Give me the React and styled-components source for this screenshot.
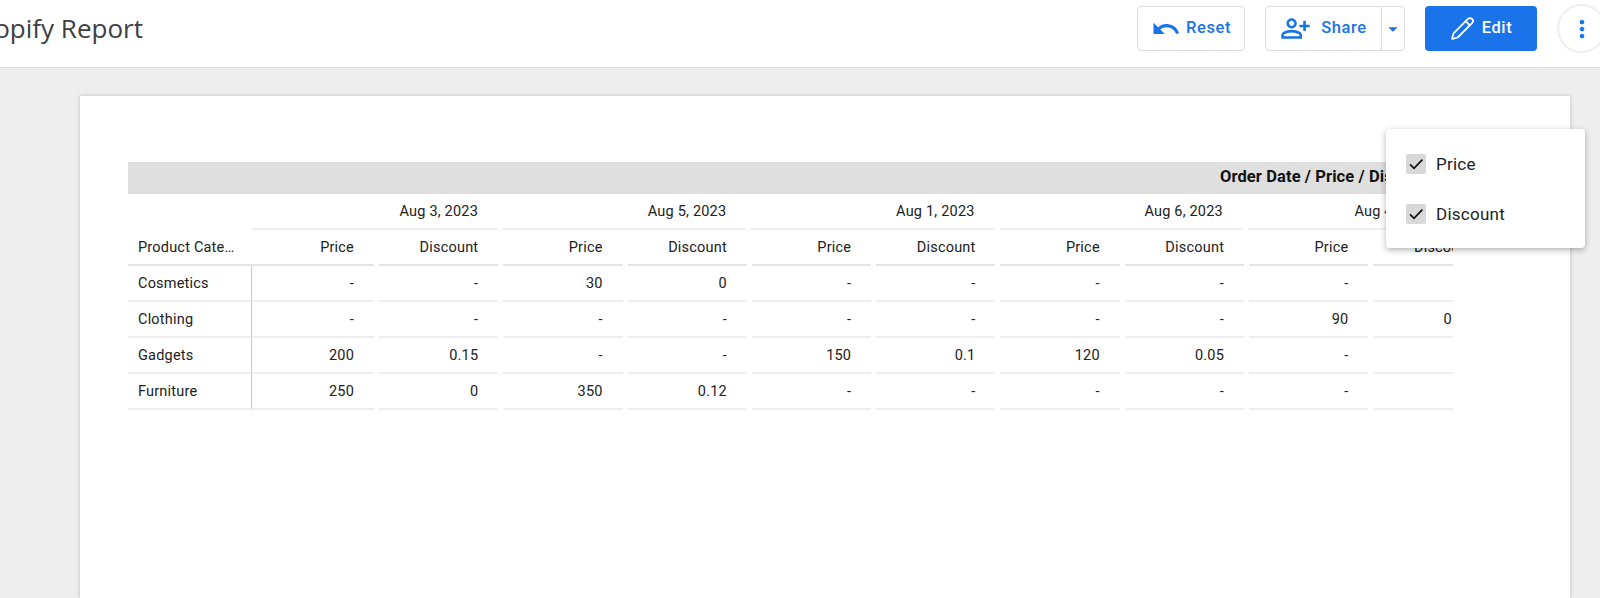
import React from "react";
import styled, { createGlobalStyle } from "styled-components";
import { MdUndo, MdOutlinePersonAddAlt, MdArrowDropDown, MdMoreVert } from "react-icons/md";
import { Pencil } from "lucide-react";

const GlobalStyle = createGlobalStyle`
  html, body {
    margin: 0;
    height: 100%;
    overflow: hidden;
    background: #eeeeee;
    font-family: Roboto, "Liberation Sans", sans-serif;
  }
`;

const Shell = styled.div`
  width: 1600px;
  height: 598px;
  overflow: hidden;
  position: relative;
  display: flex;
  flex-direction: column;
`;

const Header = styled.header`
  height: 67px;
  flex: none;
  background: #fff;
  border-bottom: 1px solid #dcdcdc;
  display: flex;
  align-items: flex-start;
  overflow: hidden;
`;

const Title = styled.h1`
  margin: 10px auto 0 -36px;
  font: 400 26px "Open Sans", sans-serif;
  color: #3c4043;
  white-space: nowrap;
`;

const ButtonLabel = styled.span`
  padding-bottom: 2px;
`;

const OutlineButton = styled.button`
  height: 45px;
  width: ${(p) => p.$width}px;
  margin: 6px ${(p) => p.$gap}px 0 0;
  box-sizing: border-box;
  display: flex;
  align-items: center;
  justify-content: center;
  gap: 5px;
  background: #fff;
  border: 1px solid #dadce0;
  border-radius: 4px;
  padding: 0;
  color: #1a73e8;
  font: 500 16.5px Roboto, sans-serif;
  letter-spacing: 0.6px;
`;

const SplitButton = styled.div`
  height: 45px;
  width: 140px;
  margin: 6px 20px 0 0;
  box-sizing: border-box;
  display: flex;
  background: #fff;
  border: 1px solid #dadce0;
  border-radius: 4px;
  color: #1a73e8;
  font: 500 16.5px Roboto, sans-serif;
  letter-spacing: 0.6px;
`;

const SplitMain = styled.div`
  width: 115px;
  flex: none;
  display: flex;
  align-items: center;
  justify-content: center;
  gap: 10px;
  border-right: 1px solid #dadce0;
`;

const SplitArrow = styled.div`
  flex: 1;
  display: flex;
  align-items: center;
  justify-content: center;
`;

const EditButton = styled.button`
  height: 45px;
  width: 112px;
  margin: 6px 20px 0 0;
  display: flex;
  align-items: center;
  justify-content: center;
  gap: 7px;
  background: #1a73e8;
  border: none;
  border-radius: 4px;
  padding: 0;
  color: #fff;
  font: 500 16.5px Roboto, sans-serif;
  letter-spacing: 0.6px;
`;

const MoreButton = styled.div`
  width: 49px;
  height: 49px;
  flex: none;
  margin: 4px -6px 0 0;
  box-sizing: border-box;
  border: 2px solid #eeeeee;
  border-radius: 50%;
  background: #fff;
  color: #1a73e8;
  display: flex;
  align-items: center;
  justify-content: center;
`;

const Canvas = styled.main`
  flex: 1;
  padding: 28px 30px 0 80px;
  min-height: 0;
`;

const Page = styled.section`
  height: 100%;
  background: #fff;
  box-shadow: 0 0 4px rgba(0, 0, 0, 0.22);
  padding: 66px 0 0 48px;
  box-sizing: border-box;
`;

const Table = styled.div`
  width: 1325px;
  overflow: hidden;
  font-size: 14.5px;
  letter-spacing: 0.2px;
  color: #212121;
`;

const TitleBar = styled.div`
  height: 32px;
  background: #dfdfdf;
  padding-left: 1092px;
  line-height: 30px;
  font-weight: 700;
  font-size: 16.5px;
  letter-spacing: 0.1px;
  white-space: nowrap;
  color: #111;
`;

const Row = styled.div`
  display: flex;
  height: 36px;
  width: 1500px;
`;

const DateSpacer = styled.div`
  width: 124px;
  flex: none;
`;

const DateCell = styled.div`
  width: ${(p) => p.$width}px;
  margin-left: ${(p) => (p.$first ? 0 : 5)}px;
  flex: none;
  box-sizing: border-box;
  padding-right: 20px;
  text-align: right;
  line-height: 36px;
  border-bottom: 2px solid #eeeeee;
`;

const LabelCell = styled.div`
  width: 124px;
  flex: none;
  box-sizing: border-box;
  padding-left: 10px;
  line-height: 36px;
  border-bottom: 2px solid ${(p) => (p.$head ? "#e4e4e4" : "#eeeeee")};
  border-right: ${(p) => (p.$head ? "none" : "1px solid #c9c9c9")};
`;

const Cell = styled.div`
  width: 119.3px;
  margin-left: 5px;
  flex: none;
  box-sizing: border-box;
  padding-right: 20px;
  text-align: right;
  line-height: 36px;
  white-space: nowrap;
  border-bottom: 2px solid ${(p) => (p.$head ? "#e4e4e4" : "#eeeeee")};

  ${LabelCell} + & {
    width: 122px;
    margin-left: 0;
  }
`;

const Popup = styled.div`
  position: absolute;
  left: 1386px;
  top: 129px;
  width: 199px;
  height: 119px;
  box-sizing: border-box;
  padding: 1px 0 0 20px;
  background: #fff;
  border-radius: 4px;
  box-shadow: 0 2px 6px rgba(0, 0, 0, 0.3);
  display: flex;
  flex-direction: column;
  justify-content: center;
  gap: 30px;
`;

const Option = styled.label`
  display: flex;
  align-items: center;
  height: 20px;
  gap: 10px;
  font-size: 17px;
  letter-spacing: 0.25px;
  color: #212121;
`;

const CheckBox = styled.span`
  width: 20px;
  height: 20px;
  flex: none;
  background: #d8d8d8;
  border-radius: 2px;
  display: flex;
  align-items: center;
  justify-content: center;
`;

const dates = [
  { label: "Aug 3, 2023", width: 246 },
  { label: "Aug 5, 2023", width: 243.3 },
  { label: "Aug 1, 2023", width: 243.3 },
  { label: "Aug 6, 2023", width: 243.3 },
  { label: "Aug 4, 2023", width: 205 },
];

const rows = [
  ["Cosmetics", "-", "-", "30", "0", "-", "-", "-", "-", "-", "-"],
  ["Clothing", "-", "-", "-", "-", "-", "-", "-", "-", "90", "0.05"],
  ["Gadgets", "200", "0.15", "-", "-", "150", "0.1", "120", "0.05", "-", "-"],
  ["Furniture", "250", "0", "350", "0.12", "-", "-", "-", "-", "-", "-"],
];

const Check = () => (
  <svg width="16" height="16" viewBox="0 0 16 16" fill="none">
    <path d="M2 8.4 L6 12.4 L14.4 3.6" stroke="#111" strokeWidth="1.7" />
  </svg>
);

export default function App() {
  return (
    <Shell>
      <GlobalStyle />
      <Header>
        <Title>Shopify Report</Title>
        <OutlineButton $width={108} $gap={20}>
          <MdUndo size={30} />
          <ButtonLabel>Reset</ButtonLabel>
        </OutlineButton>
        <SplitButton>
          <SplitMain>
            <MdOutlinePersonAddAlt size={31} />
            <ButtonLabel>Share</ButtonLabel>
          </SplitMain>
          <SplitArrow>
            <MdArrowDropDown size={22} />
          </SplitArrow>
        </SplitButton>
        <EditButton>
          <Pencil size={25} strokeWidth={1.7} />
          <ButtonLabel>Edit</ButtonLabel>
        </EditButton>
        <MoreButton>
          <MdMoreVert size={28} />
        </MoreButton>
      </Header>
      <Canvas>
        <Page>
          <Table>
            <TitleBar>Order Date / Price / Discount</TitleBar>
            <Row>
              <DateSpacer />
              {dates.map((d, i) => (
                <DateCell key={d.label} $first={i === 0} $width={d.width}>
                  {d.label}
                </DateCell>
              ))}
            </Row>
            <Row>
              <LabelCell $head>Product Cate…</LabelCell>
              {dates.flatMap((d) => [
                <Cell $head key={d.label + "p"}>Price</Cell>,
                <Cell $head key={d.label + "d"}>Discount</Cell>,
              ])}
            </Row>
            {rows.map(([label, ...values]) => (
              <Row key={label}>
                <LabelCell>{label}</LabelCell>
                {values.map((v, i) => (
                  <Cell key={i}>{v}</Cell>
                ))}
              </Row>
            ))}
          </Table>
        </Page>
      </Canvas>
      <Popup>
        <Option>
          <CheckBox><Check /></CheckBox>
          Price
        </Option>
        <Option>
          <CheckBox><Check /></CheckBox>
          Discount
        </Option>
      </Popup>
    </Shell>
  );
}
